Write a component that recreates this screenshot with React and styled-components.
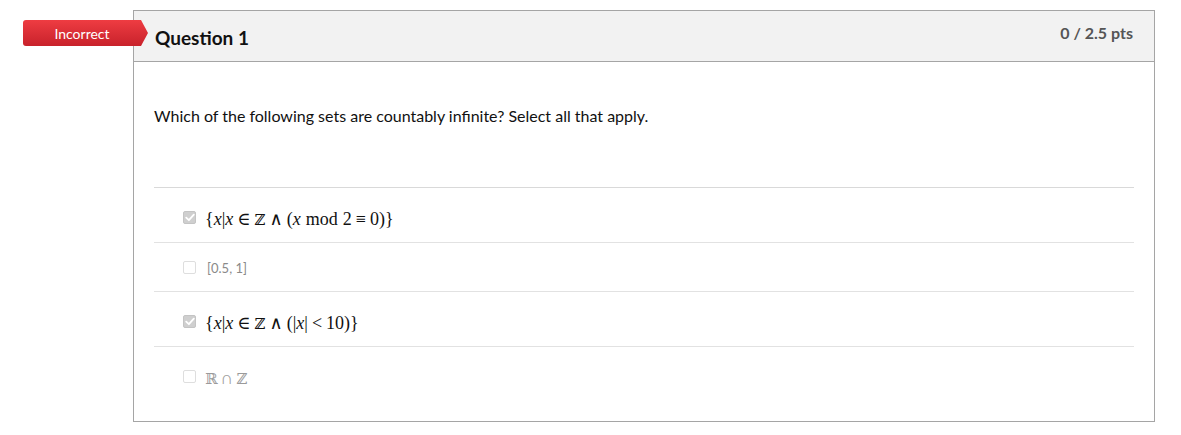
import React from "react";
import styled, { createGlobalStyle } from "styled-components";

const Global = createGlobalStyle`
  html, body { margin: 0; padding: 0; background: #fff; }
  body { font-family: Lato, "Open Sans", sans-serif; color: #2d3b45; }
`;

const Page = styled.div`
  padding: 10px 26px 14px 133px;
`;

const Panel = styled.div`
  position: relative;
  border: 1px solid #a5a5a5;
  background: #fff;
`;

const Badge = styled.div`
  position: absolute;
  left: -111px;
  top: 9px;
  width: 125px;
  height: 26px;
  display: flex;
  align-items: center;
  box-sizing: border-box;
  background: linear-gradient(#ee3c42, #c8222b);
  clip-path: polygon(0 0, 118px 0, 125px 13px, 118px 26px, 0 26px);
  border-radius: 3px 0 0 3px;
  color: #fff;
  font-size: 14px;
  font-family: Lato, sans-serif;
`;

const BadgeText = styled.span`
  width: 118px;
  text-align: center;
`;

const Header = styled.div`
  display: flex;
  justify-content: space-between;
  align-items: flex-start;
  height: 50px;
  padding: 0 21px;
  background: #f2f2f2;
  border-bottom: 1px solid #a5a5a5;
`;

const Title = styled.h2`
  margin: 0;
  padding-top: 15px;
  font-size: 19px;
  line-height: 24px;
  font-weight: 700;
  color: #111;
`;

const Points = styled.div`
  padding-top: 12px;
  font-size: 16px;
  line-height: 20px;
  font-weight: 700;
  color: #555;
`;

const Body = styled.div`
  padding: 42px 20px 19px 20px;
`;

const QuestionText = styled.p`
  margin: 0 0 59px 0;
  font-size: 16px;
  line-height: 24px;
  color: #111;
`;

const Answers = styled.div`
  border-top: 1px solid #d9d9d9;
`;

const Row = styled.div`
  display: flex;
  align-items: center;
  gap: 9px;
  padding: ${p => (p.$math ? "4px" : "1px")} 0 0 29px;
  box-sizing: border-box;
  border-bottom: ${p => (p.$last ? "none" : "1px solid #e2e2e2")};
  height: ${p => (p.$math ? 55 : 49)}px;
`;

const Box = styled.span`
  width: 13px;
  height: 13px;
  box-sizing: border-box;
  border-radius: 2px;
  flex: none;
  display: flex;
  align-items: center;
  justify-content: center;
  background: ${p => (p.$checked ? "#cfcfcf" : "#fff")};
  border: 1px solid ${p => (p.$checked ? "#c4c4c4" : "#dedede")};
`;

const Label = styled.span`
  margin-left: 2px;
  font-size: 13px;
  color: #8a8a8a;
`;

const Math = styled.span`
  display: inline-block;
  padding-top: 3px;
  font-family: "Liberation Serif", "DejaVu Serif", serif;
  font-size: 18px;
  color: ${p => (p.$muted ? "#9a9a9a" : "#111")};
  white-space: pre;
`;

const V = styled.i`
  font-family: "Liberation Serif", "DejaVu Serif", serif;
  font-style: italic;
`;

const Op = styled.span`
  margin: 0 ${p => p.$sp || 4}px;
`;

const Ds = styled.span`
  font-family: "DejaVu Serif", serif;
  font-size: 15px;
`;

const Check = () => (
  <svg width="10" height="9" viewBox="0 0 10 9">
    <path d="M1.2 4.6 L3.9 7.2 L8.8 1.6" fill="none" stroke="#fff" strokeWidth="1.8" strokeLinecap="round" strokeLinejoin="round" />
  </svg>
);

export default function App() {
  return (
    <>
      <Global />
      <Page>
        <Panel>
          <Badge><BadgeText>Incorrect</BadgeText></Badge>
          <Header>
            <Title>Question 1</Title>
            <Points>0 / 2.5 pts</Points>
          </Header>
          <Body>
            <QuestionText>Which of the following sets are countably infinite? Select all that apply.</QuestionText>
            <Answers>
              <Row $math>
                <Box $checked><Check /></Box>
                <Math>{"{"}<V>x</V>|<V>x</V><Op>∈</Op><Ds>ℤ</Ds><Op>∧</Op>(<V>x</V><Op $sp={5}>mod</Op>2<Op>≡</Op>0){"}"}</Math>
              </Row>
              <Row>
                <Box />
                <Label>[0.5, 1]</Label>
              </Row>
              <Row $math>
                <Box $checked><Check /></Box>
                <Math>{"{"}<V>x</V>|<V>x</V><Op>∈</Op><Ds>ℤ</Ds><Op>∧</Op>(|<V>x</V>|<Op>{"<"}</Op>10){"}"}</Math>
              </Row>
              <Row $math $last>
                <Box />
                <Math $muted><Ds>ℝ</Ds><Op $sp={3}>∩</Op><Ds>ℤ</Ds></Math>
              </Row>
            </Answers>
          </Body>
        </Panel>
      </Page>
    </>
  );
}
